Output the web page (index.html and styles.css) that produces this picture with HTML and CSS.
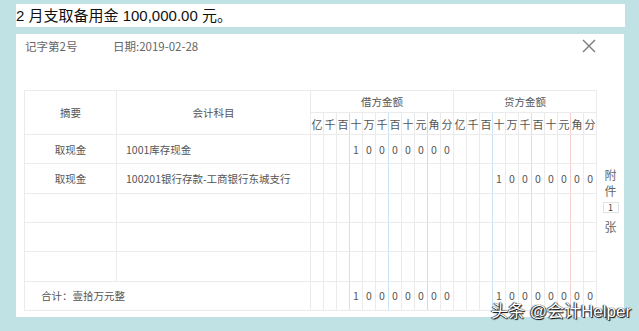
FILE: index.html
```html
<!DOCTYPE html>
<html lang="zh">
<head>
<meta charset="utf-8">
<title>记账凭证</title>
<link rel="stylesheet" href="styles.css">
</head>
<body>
<div class="strip">2 月支取备用金 100,000.00 元。</div>
<div class="card">
  <div class="head">
    <span class="no">记字第2号</span>
    <span class="date">日期:2019-02-28</span>
    <svg class="close" width="14" height="14" viewBox="0 0 14 14"><path d="M1 1L13 13M13 1L1 13" stroke="#7a7a7a" stroke-width="1.4" fill="none"/></svg>
  </div>
  <div class="body">
    <table class="voucher">
      <colgroup>
        <col class="c-sum"><col class="c-acc">
        <col class="c-d"><col class="c-d"><col class="c-d"><col class="c-d"><col class="c-d"><col class="c-d"><col class="c-d"><col class="c-d"><col class="c-d"><col class="c-d"><col class="c-d">
        <col class="c-d"><col class="c-d"><col class="c-d"><col class="c-d"><col class="c-d"><col class="c-d"><col class="c-d"><col class="c-d"><col class="c-d"><col class="c-d"><col class="c-d">
      </colgroup>
      <thead>
        <tr class="h1">
          <th rowspan="2">摘要</th>
          <th rowspan="2">会计科目</th>
          <th colspan="11">借方金额</th>
          <th colspan="11">贷方金额</th>
        </tr>
        <tr class="h2">
          <th>亿</th><th>千</th><th class="b">百</th><th>十</th><th>万</th><th class="b">千</th><th>百</th><th>十</th><th class="r">元</th><th>角</th><th>分</th>
          <th>亿</th><th>千</th><th class="b">百</th><th>十</th><th>万</th><th class="b">千</th><th>百</th><th>十</th><th class="r">元</th><th>角</th><th>分</th>
        </tr>
      </thead>
      <tbody>
        <tr>
          <td class="sum">取现金</td><td class="acc">1001库存现金</td>
          <td></td><td></td><td class="b"></td><td>1</td><td>0</td><td class="b">0</td><td>0</td><td>0</td><td class="r">0</td><td>0</td><td>0</td>
          <td></td><td></td><td class="b"></td><td></td><td></td><td class="b"></td><td></td><td></td><td class="r"></td><td></td><td></td>
        </tr>
        <tr>
          <td class="sum">取现金</td><td class="acc">100201银行存款-工商银行东城支行</td>
          <td></td><td></td><td class="b"></td><td></td><td></td><td class="b"></td><td></td><td></td><td class="r"></td><td></td><td></td>
          <td></td><td></td><td class="b"></td><td>1</td><td>0</td><td class="b">0</td><td>0</td><td>0</td><td class="r">0</td><td>0</td><td>0</td>
        </tr>
        <tr>
          <td class="sum"></td><td class="acc"></td>
          <td></td><td></td><td class="b"></td><td></td><td></td><td class="b"></td><td></td><td></td><td class="r"></td><td></td><td></td>
          <td></td><td></td><td class="b"></td><td></td><td></td><td class="b"></td><td></td><td></td><td class="r"></td><td></td><td></td>
        </tr>
        <tr>
          <td class="sum"></td><td class="acc"></td>
          <td></td><td></td><td class="b"></td><td></td><td></td><td class="b"></td><td></td><td></td><td class="r"></td><td></td><td></td>
          <td></td><td></td><td class="b"></td><td></td><td></td><td class="b"></td><td></td><td></td><td class="r"></td><td></td><td></td>
        </tr>
        <tr>
          <td class="sum"></td><td class="acc"></td>
          <td></td><td></td><td class="b"></td><td></td><td></td><td class="b"></td><td></td><td></td><td class="r"></td><td></td><td></td>
          <td></td><td></td><td class="b"></td><td></td><td></td><td class="b"></td><td></td><td></td><td class="r"></td><td></td><td></td>
        </tr>
        <tr class="total">
          <td class="tot" colspan="2">合计：壹拾万元整</td>
          <td></td><td></td><td class="b"></td><td>1</td><td>0</td><td class="b">0</td><td>0</td><td>0</td><td class="r">0</td><td>0</td><td>0</td>
          <td></td><td></td><td class="b"></td><td>1</td><td>0</td><td class="b">0</td><td>0</td><td>0</td><td class="r">0</td><td>0</td><td>0</td>
        </tr>
      </tbody>
    </table>
    <div class="attach">
      <span>附</span>
      <span>件</span>
      <span class="num">1</span>
      <span>张</span>
    </div>
  </div>
</div>
<div class="mark">头条 @会计Helper</div>
</body>
</html>
```

FILE: styles.css
```css
html, body {
  margin: 0;
  padding: 0;
}
body {
  background: #c1e2e4;
  padding: 4px 0 0 16px;
  width: 623px;
  height: 327px;
  overflow: hidden;
  font-family: "Noto Sans CJK SC", "Liberation Sans", sans-serif;
  color: #555;
}
.strip {
  width: 609px;
  height: 23px;
  background: #fff;
  color: #111;
  font-family: "Liberation Sans", "Noto Sans CJK SC", sans-serif;
  font-size: 15px;
  line-height: 23px;
  white-space: nowrap;
}
.card {
  margin-top: 7px;
  width: 608px;
  height: 283px;
  background: #fff;
  box-sizing: border-box;
  padding: 0 0 0 8px;
}
.head {
  width: 572px;
  height: 24px;
  display: flex;
  align-items: center;
  font-size: 11.5px;
  color: #666;
}
.head .no {
  margin-left: 1px;
  width: 88px;
}
.head .date {
  flex: 1;
}
.head .close {
  display: block;
}
.body {
  margin-top: 32px;
  display: flex;
  align-items: center;
}
.voucher {
  width: 572px;
  table-layout: fixed;
  border-collapse: collapse;
  font-size: 10.5px;
  color: #555;
}
.c-sum { width: 92px; }
.c-acc { width: 194px; }
.c-d { width: 13px; }
.voucher th,
.voucher td {
  border: 1px solid #ebebeb;
  padding: 0;
  text-align: center;
  font-weight: normal;
  white-space: nowrap;
  overflow: hidden;
}
.voucher th {
  color: #555;
}
.voucher tr.h1 { height: 22px; }
.voucher tr.h2 { height: 22px; }
.voucher tr.h2 th { font-size: 11px; }
.voucher tbody tr { height: 29.33px; }
.voucher .b { border-right-color: #c9e4f7; }
.voucher .r { border-right-color: #f5cfcf; }
.voucher td.acc {
  text-align: left;
  padding-left: 9px;
}
.voucher td.tot {
  text-align: left;
  padding-left: 16px;
}
.attach {
  flex: 1;
  display: flex;
  flex-direction: column;
  align-items: center;
  font-size: 12px;
  line-height: 16px;
  color: #666;
  padding-top: 2px;
}
.attach .num {
  margin: 3px 0 6px;
  width: 14px;
  height: 9px;
  border: 1px solid #e2e2e2;
  font-size: 9px;
  line-height: 9px;
  text-align: center;
  color: #444;
}
.mark {
  position: absolute;
  left: 491px;
  top: 304px;
  font-family: "Liberation Sans", "Noto Sans CJK SC", sans-serif;
  font-size: 17px;
  line-height: 16px;
  color: #fff;
  white-space: nowrap;
  text-shadow: 0 0 1px #000, 1px 1px 1px #000, -1px 0 1px #333;
}
```
